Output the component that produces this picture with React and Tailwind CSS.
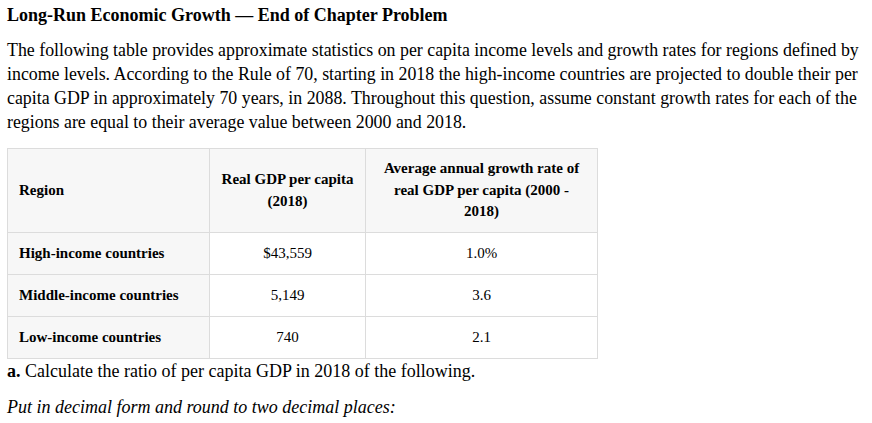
import React from 'react';

const rows = [
    { region: 'High-income countries', gdp: '$43,559', rate: '1.0%' },
    { region: 'Middle-income countries', gdp: '5,149', rate: '3.6' },
    { region: 'Low-income countries', gdp: '740', rate: '2.1' },
];

const App = () => {
    return (
        <div className="bg-white text-black px-[7px] pt-[4px]" style={{ fontFamily: '"Liberation Serif", "Times New Roman", serif' }}>
            <h1 className="text-[18px] font-bold leading-[22px]">Long-Run Economic Growth — End of Chapter Problem</h1>
            <p className="mt-[12px] text-[17.85px] leading-[24px]">
                The following table provides approximate statistics on per capita income levels and growth rates for regions defined by income levels. According to the Rule of 70, starting in 2018 the high-income countries are projected to double their per capita GDP in approximately 70 years, in 2088. Throughout this question, assume constant growth rates for each of the regions are equal to their average value between 2000 and 2018.
            </p>
            <table className="mt-[14px] border-collapse text-[15px] leading-[21.5px]">
                <thead>
                    <tr className="bg-[#f7f7f7]">
                        <th className="w-[202px] h-[84px] border border-[#dcdcdc] px-[11px] text-left font-bold">Region</th>
                        <th className="w-[156px] border border-[#dcdcdc] px-[10px] text-center font-bold">Real GDP per capita (2018)</th>
                        <th className="w-[232px] border border-[#dcdcdc] px-[10px] text-center font-bold">Average annual growth rate of real GDP per capita (2000 - 2018)</th>
                    </tr>
                </thead>
                <tbody>
                    {rows.map((r) => (
                        <tr key={r.region}>
                            <td className="h-[42px] border border-[#dcdcdc] bg-[#f7f7f7] px-[11px] font-bold">{r.region}</td>
                            <td className="border border-[#dcdcdc] text-center">{r.gdp}</td>
                            <td className="border border-[#dcdcdc] text-center">{r.rate}</td>
                        </tr>
                    ))}
                </tbody>
            </table>
            <p className="text-[18px] leading-[24px]"><b>a.</b> Calculate the ratio of per capita GDP in 2018 of the following.</p>
            <p className="mt-[12px] text-[18px] leading-[24px] italic">Put in decimal form and round to two decimal places:</p>
        </div>
    );
};

export default App;
